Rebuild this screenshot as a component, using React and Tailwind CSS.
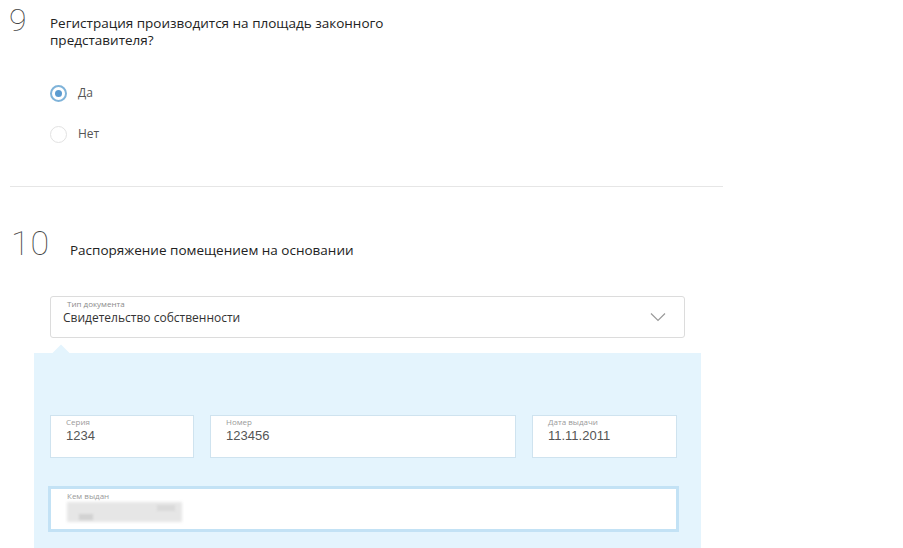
import React from "react";

const sans = { fontFamily: '"Open Sans", "Noto Sans", Arial, sans-serif' };

function Radio({ checked, label }) {
  return (
    <div className="flex items-center h-[20px]">
      {checked ? (
        <div className="w-[17px] h-[17px] rounded-full border-2 border-[#7fb3d9] flex items-center justify-center bg-white">
          <div className="w-[7px] h-[7px] rounded-full bg-[#5b9bd0]" />
        </div>
      ) : (
        <div className="w-[17px] h-[17px] rounded-full border border-[#e2e2e2] bg-white" />
      )}
      <span className="ml-[11px] text-[12px] text-[#555]">{label}</span>
    </div>
  );
}

function Field({ label, value, className }) {
  return (
    <div className={"h-[43px] bg-white border border-[#cfe3ef] pl-[15px] pt-[1px] " + className}>
      <div className="text-[8px] leading-[10px] text-[#9a9a9a]">{label}</div>
      <div className="text-[13px] leading-[18px] text-[#555]" style={{ fontFamily: '"Liberation Sans", Arial, sans-serif' }}>{value}</div>
    </div>
  );
}

export default function App() {
  return (
    <div className="w-[903px] h-[548px] overflow-hidden bg-white relative" style={sans}>
      {/* Section 9 */}
      <div className="flex pt-[1px]">
        <div className="w-[50px] pl-[9px] text-[32px] leading-[38px] font-thin text-[#444]" style={{ fontFamily: "Roboto, sans-serif" }}>9</div>
        <div className="pt-[14px] text-[13.5px] leading-[17px] text-[#222] w-[360px]">
          Регистрация производится на площадь законного представителя?
        </div>
      </div>
      <div className="ml-[50px] mt-[34px] flex flex-col gap-[21px]">
        <Radio checked label="Да" />
        <Radio label="Нет" />
      </div>
      <div className="ml-[10px] w-[713px] h-px bg-[#e6e6e6] mt-[42px]" />

      {/* Section 10 */}
      <div className="flex items-end mt-[38px]">
        <div className="w-[70px] pl-[11px] text-[34px] leading-[36px] font-thin text-[#444] tracking-[1px]" style={{ fontFamily: "Roboto, sans-serif" }}>10</div>
        <div className="text-[13.5px] leading-[17px] text-[#222] pb-[2px]">Распоряжение помещением на основании</div>
      </div>

      <div className="ml-[50px] mt-[35px] w-[635px] h-[42px] border border-[#dcdcdc] rounded-[3px] flex justify-between pl-[12px] pr-[18px] bg-white">
        <div className="pt-[2px]">
          <div className="ml-[4px] text-[8px] leading-[10px] text-[#8a8a8a]">Тип документа</div>
          <div className="text-[12px] leading-[18px] text-[#333]">Свидетельство собственности</div>
        </div>
        <svg className="self-center" width="16" height="10" viewBox="0 0 16 10" fill="none">
          <path d="M1 1.5 L8 8.5 L15 1.5" stroke="#9a9a9a" strokeWidth="1.2" />
        </svg>
      </div>

      <div className="relative ml-[34px] mt-[15px] w-[667px] h-[200px] bg-[#e4f4fd] pl-[16px] pt-[62px]">
        <div className="absolute left-[21px] top-[-6px] w-[12px] h-[12px] bg-[#e4f4fd] rotate-45" />
        <div className="flex gap-[16px]">
          <Field label="Серия" value="1234" className="w-[144px]" />
          <Field label="Номер" value="123456" className="w-[306px]" />
          <Field label="Дата выдачи" value="11.11.2011" className="w-[145px]" />
        </div>
        <div className="-ml-[2px] mt-[28px] w-[631px] h-[46px] bg-white border-[3px] border-[#c3e2f5] pl-[16px] pt-[2px]">
          <div className="text-[8px] leading-[10px] text-[#9a9a9a]">Кем выдан</div>
          <div className="mt-[1px] relative w-[115px] h-[20px]">
            <div className="absolute inset-0 bg-[#e6e6e6] blur-[1.5px]" />
            <div className="absolute left-[12px] top-[12px] w-[14px] h-[6px] bg-[#d2d2d2] blur-[1px]" />
            <div className="absolute left-[90px] top-[3px] w-[18px] h-[6px] bg-[#dadada] blur-[1px]" />
          </div>
        </div>
      </div>
    </div>
  );
}
